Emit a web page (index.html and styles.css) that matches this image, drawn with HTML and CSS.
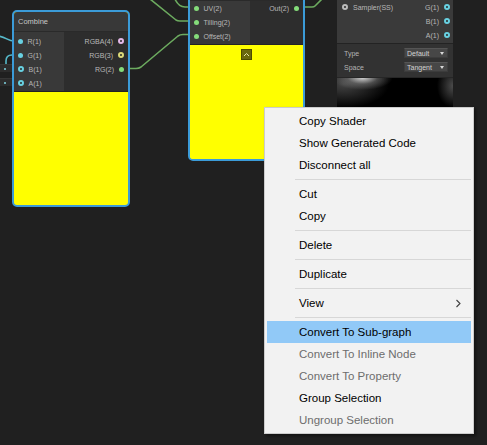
FILE: index.html
```html
<!DOCTYPE html>
<html>
<head>
<meta charset="utf-8">
<link rel="stylesheet" href="styles.css">
</head>
<body>
<div class="canvas">
  <svg class="wires" width="487" height="445" viewBox="0 0 487 445">
    <g fill="none" stroke-linecap="round" stroke-linejoin="round">
      <path class="w-teal" d="M-2,36 C6,37 8,41 14,41 L20,41"/>
      <path class="w-teal" d="M20,55 L12,55 Q6,55 6,61 L6,64"/>
      <path class="w-teal thin" d="M13,68.5 L18,68.5"/>
      <path class="w-teal thin" d="M13,82.5 L18,82.5"/>
      <path class="w-green" d="M121,68.5 L136,68.5 Q139,68.5 141,67 L178,36 Q180,34.5 183,34.5 L196,34.5"/>
      <path class="w-green" d="M150,-1 L176,20 Q177.5,21 180,21 L196,21"/>
      <path class="w-green" d="M174,-3 Q178,7 185,7 L196,7"/>
      <path class="w-green" d="M297,7 L312,7 Q314,7 315,6 L323,-2"/>
    </g>
  </svg>

  <div class="stub stub-b"><span class="sdot"></span></div>
  <div class="stub stub-a"><span class="sdot"></span></div>

  <div class="node combine">
    <div class="title">Combine</div>
    <div class="ports">
      <div class="col in">
        <div class="row"><span class="dot fill teal"></span><span>R(1)</span></div>
        <div class="row"><span class="dot fill teal"></span><span>G(1)</span></div>
        <div class="row"><span class="dot ring teal"></span><span>B(1)</span></div>
        <div class="row"><span class="dot ring teal"></span><span>A(1)</span></div>
      </div>
      <div class="col out">
        <div class="row"><span>RGBA(4)</span><span class="dot ring pink"></span></div>
        <div class="row"><span>RGB(3)</span><span class="dot ring yellow"></span></div>
        <div class="row"><span>RG(2)</span><span class="dot fill green"></span></div>
      </div>
    </div>
  </div>

  <div class="node tiling">
    <div class="title hidden"></div>
    <div class="ports">
      <div class="col in">
        <div class="row"><span class="dot fill green"></span><span>UV(2)</span></div>
        <div class="row"><span class="dot fill green"></span><span>Tilling(2)</span></div>
        <div class="row"><span class="dot fill green"></span><span>Offset(2)</span></div>
      </div>
      <div class="col out">
        <div class="row"><span>Out(2)</span><span class="dot fill green"></span></div>
      </div>
    </div>
    <div class="preview-yellow">
      <div class="collapse">
        <svg width="9" height="9" viewBox="0 0 9 9"><polyline points="2,6 4.5,3.5 7,6" fill="none" stroke="#e6e4a8" stroke-width="1"/></svg>
      </div>
    </div>
  </div>

  <div class="node sample">
    <div class="ports flat">
      <div class="col in">
        <div class="row"><span class="dot ring grey"></span><span>Sampler(SS)</span></div>
      </div>
      <div class="col out">
        <div class="row"><span>G(1)</span><span class="dot ring teal"></span></div>
        <div class="row"><span>B(1)</span><span class="dot ring teal"></span></div>
        <div class="row"><span>A(1)</span><span class="dot ring teal"></span></div>
      </div>
    </div>
    <div class="settings">
      <div class="setting"><span>Type</span><span class="drop">Default<i class="tri"></i></span></div>
      <div class="setting"><span>Space</span><span class="drop">Tangent<i class="tri"></i></span></div>
    </div>
    <div class="normal-preview"></div>
  </div>

  <div class="menu">
    <div class="item">Copy Shader</div>
    <div class="item">Show Generated Code</div>
    <div class="item">Disconnect all</div>
    <div class="sep"></div>
    <div class="item">Cut</div>
    <div class="item">Copy</div>
    <div class="sep"></div>
    <div class="item">Delete</div>
    <div class="sep"></div>
    <div class="item">Duplicate</div>
    <div class="sep"></div>
    <div class="item sub">View
      <svg class="arrow" width="6" height="9" viewBox="0 0 6 9"><polyline points="1.5,1 5,4.5 1.5,8" fill="none" stroke="#404040" stroke-width="1.1"/></svg>
    </div>
    <div class="sep"></div>
    <div class="item active">Convert To Sub-graph</div>
    <div class="item disabled">Convert To Inline Node</div>
    <div class="item disabled">Convert To Property</div>
    <div class="item">Group Selection</div>
    <div class="item disabled">Ungroup Selection</div>
  </div>
</div>
</body>
</html>
```

FILE: styles.css
```css
html, body {
  margin: 0;
  padding: 0;
  background: #202020;
}

.canvas {
  position: relative;
  width: 487px;
  height: 445px;
  overflow: hidden;
  background: #202020;
  font-family: "Liberation Sans", Arial, sans-serif;
}

.wires {
  position: absolute;
  left: 0;
  top: 0;
}

.w-teal {
  stroke: #56b8c9;
  stroke-width: 1.6;
}

.w-teal.thin {
  stroke-width: 1;
}

.w-green {
  stroke: #6cab5f;
  stroke-width: 1.6;
}

/* inline default-value stubs */
.stub {
  position: absolute;
  left: 0;
  width: 13px;
  height: 8px;
  background: #2c2c2c;
  border-top: 1px solid #363636;
  box-sizing: border-box;
  display: flex;
  align-items: center;
  padding-left: 4px;
}

.stub-b { top: 64px; }
.stub-a { top: 78px; }

.sdot {
  width: 2px;
  height: 2px;
  border-radius: 50%;
  background: #7fd4e2;
}

/* nodes */
.node {
  position: absolute;
  box-sizing: border-box;
  overflow: hidden;
  display: flex;
  flex-direction: column;
  color: #b8b8b8;
  font-size: 7px;
}

.combine {
  left: 12px;
  top: 10px;
  width: 118px;
  height: 197px;
  border: 2px solid #3b9bd8;
  border-radius: 5px;
  background: #ffff00;
}

.tiling {
  left: 188px;
  top: -20px;
  width: 117px;
  height: 181px;
  border: 2px solid #3b9bd8;
  border-radius: 5px;
  background: #ffff00;
}

.sample {
  left: 337px;
  top: 0;
  width: 116px;
  height: 130px;
  background: #2f2f2f;
}

.title {
  height: 20px;
  flex: none;
  background: #383838;
  border-bottom: 1px solid #2a2a2a;
  box-sizing: border-box;
  display: flex;
  align-items: center;
  padding-left: 4px;
  font-size: 7.5px;
  color: #c6c6c6;
}

.title.hidden {
  height: 19px;
}

.ports {
  display: flex;
  flex: none;
  border-bottom: 1px solid #232323;
}

.combine .ports { height: 59px; }
.tiling .ports { height: 43px; }

.col {
  display: flex;
  flex-direction: column;
  box-sizing: border-box;
}

.col.in {
  background: #393939;
  padding-left: 3.5px;
}

.col.out {
  flex: 1;
  background: #2d2d2d;
  align-items: flex-end;
  padding-right: 4px;
}

.combine .col.in { width: 50px; padding-top: 2px; }
.combine .col.out { padding-top: 2px; }
.tiling .col.in { width: 60px; }

.row {
  height: 14px;
  display: flex;
  align-items: center;
  gap: 5px;
  white-space: nowrap;
}

.dot {
  width: 5px;
  height: 5px;
  border-radius: 50%;
  box-sizing: border-box;
  flex: none;
}

.dot.ring {
  width: 6px;
  height: 6px;
  border: 2px solid #68d1e2;
  background: #2a2a2a;
}

.dot.fill.teal { background: #68d1e2; }
.dot.fill.green { background: #84dc7a; }
.dot.ring.teal { border-color: #68d1e2; }
.dot.ring.pink { border-color: #e3b8e9; }
.dot.ring.yellow { border-color: #dcd878; }
.dot.ring.grey { border-color: #bcbcbc; }

.preview-yellow {
  flex: 1;
  background: #ffff00;
  display: flex;
  justify-content: center;
  align-items: flex-start;
  padding-top: 4px;
}

.collapse {
  width: 11px;
  height: 11px;
  box-sizing: border-box;
  background: #6a680e;
  border: 1px solid #4e4c00;
  display: flex;
  align-items: center;
  justify-content: center;
}

/* sample node */
.ports.flat {
  height: 43px;
  background: #3a3a3a;
}

.ports.flat .col.in,
.ports.flat .col.out {
  background: transparent;
}

.sample .col.in {
  padding-left: 5px;
  width: 62px;
}

.sample .col.out {
  padding-right: 3px;
}

.settings {
  flex: none;
  height: 34px;
  box-sizing: border-box;
  padding: 2px 5px 3px 7px;
  border-bottom: 1px solid #262626;
  background: #323232;
  display: flex;
  flex-direction: column;
}

.setting {
  height: 14px;
  display: flex;
  align-items: center;
  justify-content: space-between;
  color: #b4b4b4;
}

.drop {
  width: 44px;
  height: 10px;
  box-sizing: border-box;
  background: #474747;
  border: 1px solid #3c3c3c;
  border-top-color: #555555;
  display: flex;
  align-items: center;
  justify-content: space-between;
  padding: 0 3px 0 2px;
  color: #d2d2d2;
}

.tri {
  width: 0;
  height: 0;
  border-left: 2.5px solid transparent;
  border-right: 2.5px solid transparent;
  border-top: 3px solid #d8d8d8;
}

.normal-preview {
  flex: 1;
  background:
    radial-gradient(ellipse 30px 12px at 22% 0%, rgba(225,225,225,0.9) 0%, rgba(140,140,140,0.45) 50%, rgba(0,0,0,0) 100%),
    radial-gradient(ellipse 45px 24px at 6% 12%, rgba(90,90,90,0.75) 0%, rgba(0,0,0,0) 100%),
    radial-gradient(ellipse 16px 22px at 100% 15%, rgba(95,95,95,0.8) 0%, rgba(0,0,0,0) 100%),
    #000000;
}

/* context menu */
.menu {
  position: absolute;
  left: 264px;
  top: 107px;
  width: 210px;
  box-sizing: border-box;
  background: #f2f2f2;
  border: 1px solid #cccccc;
  padding: 2px 0;
  box-shadow: 2px 2px 3px rgba(0, 0, 0, 0.45);
  font-family: "Liberation Sans", Arial, sans-serif;
  font-size: 11.5px;
  color: #000000;
}

.item {
  height: 22px;
  line-height: 22px;
  margin: 0 2px;
  padding-left: 32px;
  white-space: nowrap;
  position: relative;
}

.item.active {
  background: #91c9f7;
}

.item.disabled {
  color: #6d6d6d;
}

.item.sub {
  display: flex;
  align-items: center;
  justify-content: space-between;
  padding-right: 10px;
}

.sep {
  height: 7px;
  margin: 0 2px 0 30px;
  display: flex;
  align-items: center;
}

.sep::after {
  content: "";
  display: block;
  width: 100%;
  height: 1px;
  background: #d7d7d7;
}
```
